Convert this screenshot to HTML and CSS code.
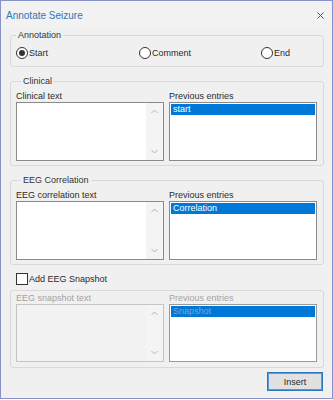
FILE: index.html
```html
<!DOCTYPE html>
<html>
<head>
<meta charset="utf-8">
<link rel="stylesheet" href="styles.css">
</head>
<body>
<div class="window">
  <div class="titlebar">
    <span class="title">Annotate Seizure</span>
    <svg class="close" width="7" height="7" viewBox="0 0 7 7"><path d="M0.5 0.5L6.5 6.5M6.5 0.5L0.5 6.5" stroke="#555" stroke-width="1"/></svg>
  </div>
  <div class="content">
    <div class="group annotation">
      <div class="legend">Annotation</div>
      <div class="radios">
        <div class="radio"><span class="circle checked"></span>Start</div>
        <div class="radio"><span class="circle"></span>Comment</div>
        <div class="radio"><span class="circle"></span>End</div>
      </div>
    </div>

    <div class="group pair clinical">
      <div class="legend">Clinical</div>
      <div class="cols">
        <div class="col">
          <div class="label">Clinical text</div>
          <div class="textbox">
            <div class="text-area"></div>
            <div class="sb">
              <svg width="17" height="17" viewBox="0 0 17 17"><path d="M5.5 10L8.5 7L11.5 10" fill="none" stroke="#b4b4b4" stroke-width="1"/></svg>
              <svg width="17" height="17" viewBox="0 0 17 17"><path d="M5.5 7L8.5 10L11.5 7" fill="none" stroke="#b4b4b4" stroke-width="1"/></svg>
            </div>
          </div>
        </div>
        <div class="col">
          <div class="label">Previous entries</div>
          <div class="listbox">
            <div class="item sel">start</div>
          </div>
        </div>
      </div>
    </div>

    <div class="group pair correlation">
      <div class="legend">EEG Correlation</div>
      <div class="cols">
        <div class="col">
          <div class="label">EEG correlation text</div>
          <div class="textbox">
            <div class="text-area"></div>
            <div class="sb">
              <svg width="17" height="17" viewBox="0 0 17 17"><path d="M5.5 10L8.5 7L11.5 10" fill="none" stroke="#b4b4b4" stroke-width="1"/></svg>
              <svg width="17" height="17" viewBox="0 0 17 17"><path d="M5.5 7L8.5 10L11.5 7" fill="none" stroke="#b4b4b4" stroke-width="1"/></svg>
            </div>
          </div>
        </div>
        <div class="col">
          <div class="label">Previous entries</div>
          <div class="listbox">
            <div class="item sel">Correlation</div>
          </div>
        </div>
      </div>
    </div>

    <div class="check-row"><span class="checkbox"></span>Add EEG Snapshot</div>

    <div class="group pair snapshot disabled">
      <div class="cols">
        <div class="col">
          <div class="label">EEG snapshot text</div>
          <div class="textbox">
            <div class="text-area"></div>
            <div class="sb">
              <svg width="17" height="17" viewBox="0 0 17 17"><path d="M5.5 10L8.5 7L11.5 10" fill="none" stroke="#b4b4b4" stroke-width="1"/></svg>
              <svg width="17" height="17" viewBox="0 0 17 17"><path d="M5.5 7L8.5 10L11.5 7" fill="none" stroke="#b4b4b4" stroke-width="1"/></svg>
            </div>
          </div>
        </div>
        <div class="col">
          <div class="label">Previous entries</div>
          <div class="listbox">
            <div class="item sel">Snapshot</div>
          </div>
        </div>
      </div>
    </div>

    <div class="buttons"><button class="btn">Insert</button></div>
  </div>
</div>
</body>
</html>
```

FILE: styles.css
```css
html, body {
  margin: 0;
  padding: 0;
  background: #ffffff;
}
body {
  font-family: "Liberation Sans", Arial, sans-serif;
  font-size: 9px;
  color: #2b2b2b;
}
.window {
  box-sizing: border-box;
  width: 333px;
  height: 399px;
  border: 1px solid #8a93c9;
  background: #f0f0f0;
  display: flex;
  flex-direction: column;
}
.titlebar {
  height: 27px;
  flex: none;
  display: flex;
  align-items: center;
  justify-content: space-between;
  padding: 0 8px 0 5px;
  background: #f2f2f2;
}
.title {
  font-size: 10px;
  color: #2f77b6;
  line-height: 12px;
  padding-top: 2px;
}
.close {
  display: block;
  margin-top: 1px;
}
.content {
  padding: 0 8px 0 9px;
  display: flex;
  flex-direction: column;
}
.group {
  border: 1px solid #d9d9d9;
  border-radius: 3px;
  display: flex;
  flex-direction: column;
}
.legend {
  align-self: flex-start;
  margin: -6px 0 0 5px;
  padding: 0 2px;
  height: 10px;
  line-height: 10px;
  background: #f0f0f0;
  color: #333;
}
.annotation {
  margin-top: 7px;
  padding-bottom: 7px;
}
.radios {
  margin-top: 7px;
  padding-left: 5px;
  display: grid;
  grid-template-columns: 123px 122px auto;
  height: 12px;
}
.radio {
  display: flex;
  align-items: center;
  line-height: 12px;
}
.circle {
  box-sizing: border-box;
  width: 12px;
  height: 12px;
  border: 1px solid #333;
  border-radius: 50%;
  background: #fff;
  margin-right: 1px;
  display: flex;
  align-items: center;
  justify-content: center;
}
.circle.checked::after {
  content: "";
  width: 6px;
  height: 6px;
  border-radius: 50%;
  background: #333;
}
.pair {
  margin-top: 14px;
  padding: 0 6px 4px 5px;
}
.pair .cols {
  margin-top: 5px;
  display: flex;
  gap: 5px;
}
.col {
  width: 148px;
  display: flex;
  flex-direction: column;
}
.label {
  height: 11px;
  line-height: 11px;
  white-space: nowrap;
}
.textbox {
  box-sizing: border-box;
  height: 59px;
  border: 1px solid #8a8a8a;
  background: #fff;
  display: flex;
}
.text-area {
  flex: 1;
}
.sb {
  width: 17px;
  background: #f4f4f4;
  display: flex;
  flex-direction: column;
  justify-content: space-between;
}
.sb svg {
  display: block;
}
.listbox {
  box-sizing: border-box;
  height: 59px;
  border: 1px solid #8a8a8a;
  background: #fff;
  padding: 1px;
}
.item {
  height: 11px;
  line-height: 11px;
  padding-left: 2px;
}
.item.sel {
  background: #0078d7;
  color: #fff;
}
.check-row {
  margin-top: 8px;
  height: 12px;
  display: flex;
  align-items: center;
  padding-left: 6px;
}
.checkbox {
  box-sizing: border-box;
  width: 12px;
  height: 12px;
  border: 1px solid #333;
  background: #fff;
  margin-right: 1px;
}
.snapshot {
  margin-top: 5px;
  padding-bottom: 5px;
}
.snapshot .cols {
  margin-top: 2px;
}
.snapshot .textbox {
  height: 58px;
}
.snapshot .listbox {
  height: 58px;
}
.disabled .label {
  color: #a3a3a3;
}
.disabled .textbox {
  background: #f2f2f2;
  border-color: #c4c4c4;
}
.disabled .listbox {
  border-color: #9a9a9a;
}
.disabled .item.sel {
  color: #7fa5cf;
}
.buttons {
  display: flex;
  justify-content: flex-end;
  margin-top: 4px;
  padding-right: 1px;
}
.btn {
  box-sizing: border-box;
  width: 56px;
  height: 19px;
  border: 1px solid #2a78c2;
  box-shadow: inset 0 0 0 1px #5b9ad6;
  background: #e1e1e1;
  font-family: "Liberation Sans", Arial, sans-serif;
  font-size: 9px;
  color: #2b2b2b;
  padding: 0;
  margin: 0;
}
```
